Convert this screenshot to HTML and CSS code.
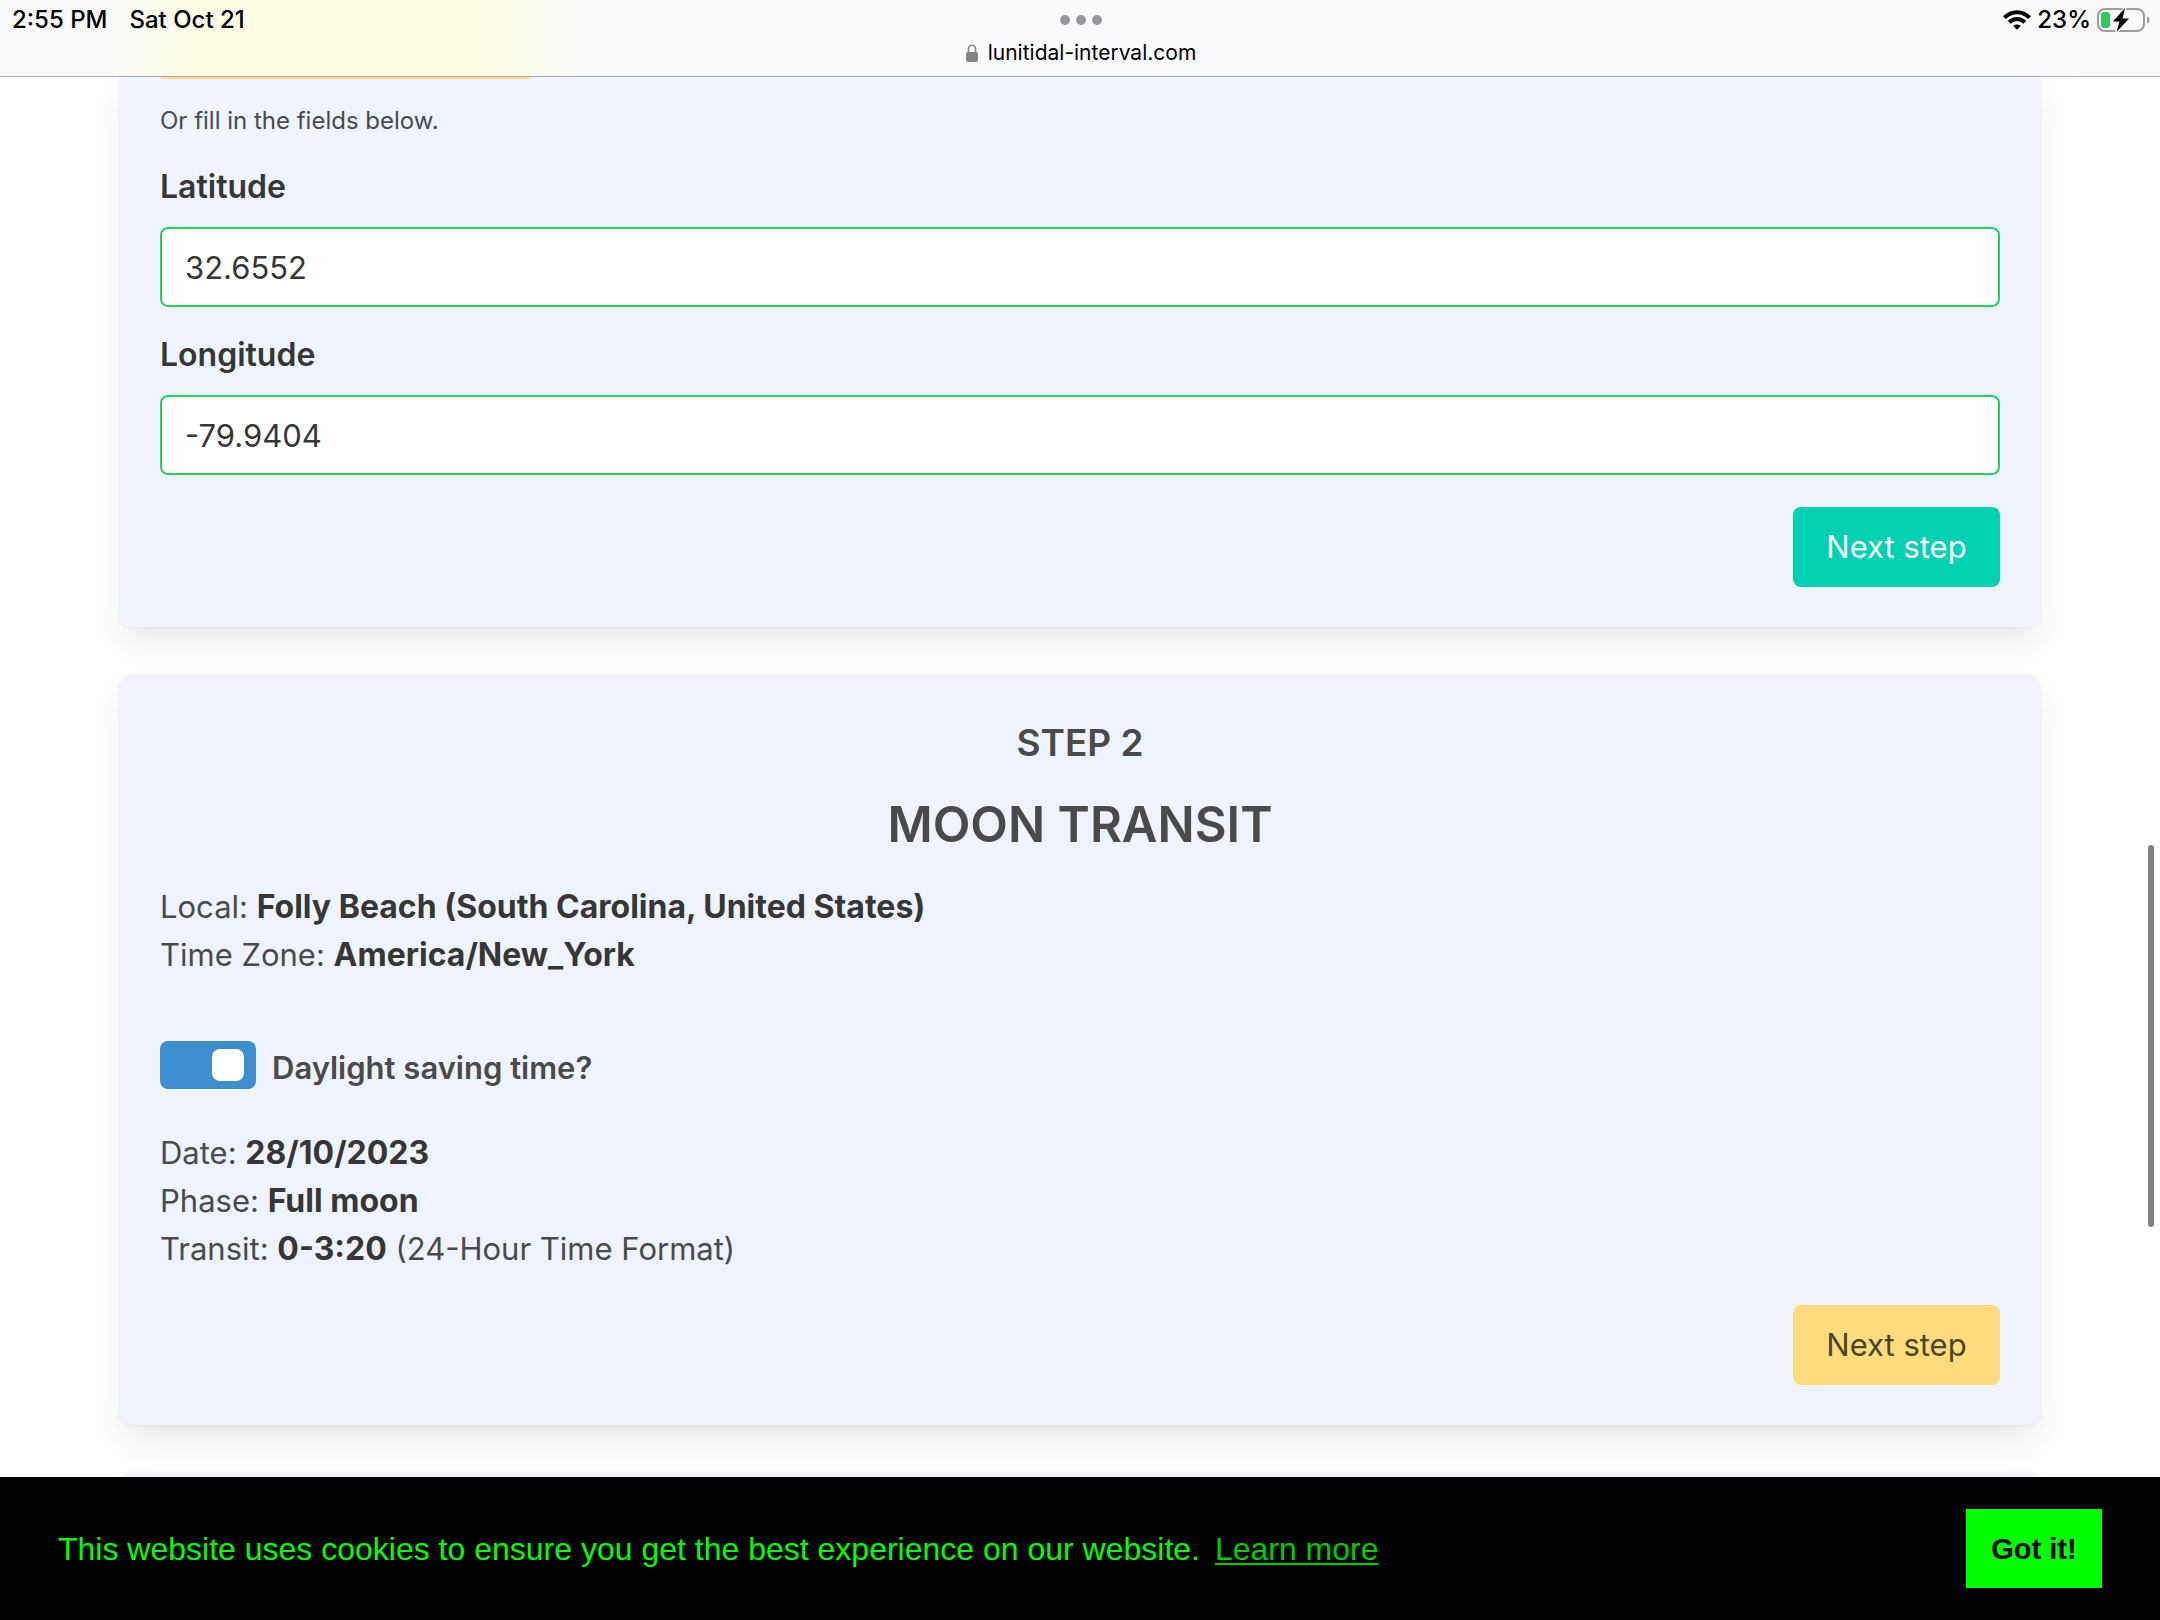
FILE: index.html
```html
<!DOCTYPE html>
<html lang="en">
<head>
    <meta charset="UTF-8">
    <meta name="viewport" content="width=device-width, initial-scale=1.0">
    <title>Lunitidal interval</title>
    <link rel="stylesheet" href="styles.css">
</head>
<body>
    <header class="topbar">
        <div class="status">
            <div class="clock">
                <span>2:55 PM</span>
                <span>Sat Oct 21</span>
            </div>
            <svg class="dots" width="42" height="10" viewBox="0 0 42 10">
                <circle cx="5" cy="5" r="5"/>
                <circle cx="21" cy="5" r="5"/>
                <circle cx="37" cy="5" r="5"/>
            </svg>
            <div class="power">
                <svg width="28" height="20" viewBox="0 0 28 20" fill="none" stroke="#000" stroke-width="4">
                    <path d="M1.5 7.6C8.500 .4 19.500 .4 26.500 7.600"/>
                    <path d="M6.200 12.200C10.600 7.900 17.400 7.900 21.800 12.200"/>
                    <path d="M10.200 15.900C12.300 13.900 15.700 13.900 17.800 15.900L14 19.800Z" fill="#000" stroke="none"/>
                </svg>
                <span>23%</span>
                <svg width="53" height="26" viewBox="0 0 53 26">
                    <rect x="1" y="2" width="46" height="22" rx="7" fill="none" stroke="#9c9c9e" stroke-width="2"/>
                    <path d="M50 9.500C53.500 10.500 53.500 15.500 50 16.500Z" fill="#9c9c9e"/>
                    <rect x="4" y="5" width="9" height="16" rx="3" fill="#34c759"/>
                    <path d="M28 1L16 14.500H22.500L19.500 25L32 11.500H25.500Z" fill="#000" stroke="#f9f9fa" stroke-width="3" paint-order="stroke"/>
                </svg>
            </div>
        </div>
        <div class="address">
            <svg width="12" height="18" viewBox="0 0 12 18">
                <path d="M2.500 9V5a3.500 3.800 0 0 1 7 0v4" fill="none" stroke="#858589" stroke-width="1.600"/>
                <rect x="0" y="8" width="12" height="10" rx="2" fill="#858589"/>
            </svg>
            <span>lunitidal-interval.com</span>
        </div>
    </header>

    <main>
        <section class="box first">
            <div class="locate"></div>
            <p class="help">Or fill in the fields below.</p>
            <div class="field">
                <label for="lat">Latitude</label>
                <input type="text" id="lat" value="32.6552">
            </div>
            <div class="field">
                <label for="lng">Longitude</label>
                <input type="text" id="lng" value="-79.9404">
            </div>
            <div class="actions">
                <button class="button primary">Next step</button>
            </div>
        </section>

        <section class="box">
            <h3>STEP 2</h3>
            <h2>MOON TRANSIT</h2>
            <p>Local: <strong>Folly Beach (South Carolina, United States)</strong></p>
            <p>Time Zone: <strong>America/New_York</strong></p>
            <div class="switch">
                <input type="checkbox" id="dst" checked>
                <label for="dst">Daylight saving time?</label>
            </div>
            <p>Date: <strong>28/10/2023</strong></p>
            <p>Phase: <strong>Full moon</strong></p>
            <p>Transit: <strong>0-3:20</strong> (24-Hour Time Format)</p>
            <div class="actions">
                <button class="button warning">Next step</button>
            </div>
        </section>

        <section class="box"></section>
    </main>

    <div class="scrollbar"></div>

    <footer class="cookies">
        <p>This website uses cookies to ensure you get the best experience on our website. <a href="#">Learn more</a></p>
        <button>Got it!</button>
    </footer>
</body>
</html>
```

FILE: styles.css
```css
*{
    box-sizing: border-box;
}
body{
    margin: 0;
    height: 100vh;
    display: flex;
    flex-direction: column;
    overflow: hidden;
    background-color: white;
    color: #4a4a4a;
    font-family: Inter, "Liberation Sans", sans-serif;
    font-size: 31px;
    line-height: 48px;
}
p, h2, h3{
    margin: 0;
}
button, input{
    font: inherit;
}

/* status bar and address */
.topbar{
    flex: none;
    height: 77px;
    padding: 4px 10px 0 12px;
    border-bottom: 1px solid #a9abae;
    background: linear-gradient(to right, #f9f9f9 110px, #fdfdf0 150px, #fffee6 200px, #fffee6 480px, #fafbfd 590px, #fafbfd 93%, #f9f9f9 97%);
    color: black;
    font-size: 24px;
    font-weight: 500;
    line-height: 32px;
}
.status{
    display: grid;
    grid-template-columns: 1fr auto 1fr;
    align-items: center;
}
.clock{
    display: flex;
    gap: 22px;
}
.dots{
    fill: #96979a;
}
.power{
    display: flex;
    align-items: center;
    justify-content: flex-end;
    gap: 6px;
}
.address{
    display: flex;
    align-items: center;
    justify-content: center;
    gap: 10px;
    font-size: 21px;
    font-weight: 400;
    line-height: 34px;
}

/* steps */
main{
    flex: 1;
    min-height: 0;
    overflow: hidden;
    padding: 0 120px;
}
.box{
    margin-bottom: 48px;
    padding: 40px;
    border-radius: 12px;
    background-color: #eff4fc;
    box-shadow: 0 16px 32px -4px rgba(10,10,10,0.1), 0 0 0 2px rgba(10,10,10,0.02);
}
.first{
    padding-top: 0;
    border-radius: 0 0 12px 12px;
}
.locate{
    width: 370px;
    height: 2px;
    border-radius: 0 0 8px 8px;
    background-color: #ffdc7d;
}
.help{
    margin: 24px 0;
    font-size: 24px;
    line-height: 36px;
}
.field{
    margin-bottom: 24px;
}
.field label{
    display: block;
    margin-bottom: 16px;
    color: #363636;
    font-size: 32px;
    font-weight: 600;
}
.field input{
    display: block;
    width: 100%;
    height: 80px;
    padding: 0 23px;
    border: 2px solid #23d160;
    border-radius: 8px;
    background-color: white;
    color: #363636;
}
strong{
    color: #363636;
    font-size: 32px;
    font-weight: 700;
}
.actions{
    display: flex;
    justify-content: flex-end;
    margin-top: 32px;
}
.button{
    height: 80px;
    width: 207px;
    padding: 0;
    border: none;
    border-radius: 8px;
    cursor: pointer;
}
.primary{
    background-color: #00d1b2;
    color: white;
}
.warning{
    background-color: #ffdc7d;
    color: #4d4426;
}
h3, h2{
    text-align: center;
    font-weight: 600;
}
h3{
    margin: 4px 0 26px;
    font-size: 37px;
}
h2{
    margin-bottom: 26px;
    font-size: 49px;
    line-height: 64px;
}
.switch{
    display: flex;
    align-items: center;
    gap: 16px;
    margin: 62px 0 40px;
}
.switch input{
    appearance: none;
    display: flex;
    justify-content: flex-end;
    width: 96px;
    height: 48px;
    margin: 0;
    padding: 8px 12px;
    border-radius: 8px;
    background-color: #3e8ed0;
}
.switch input::before{
    content: "";
    width: 32px;
    height: 32px;
    border-radius: 8px;
    background-color: white;
}
.switch label{
    padding-top: 6px;
    line-height: 42px;
    font-weight: 600;
}

.scrollbar{
    position: fixed;
    right: 6px;
    top: 845px;
    width: 6px;
    height: 382px;
    border-radius: 3px;
    background-color: #808080;
}

/* cookie banner */
.cookies{
    flex: none;
    display: flex;
    align-items: center;
    justify-content: space-between;
    padding: 32px 58px;
    background-color: black;
    color: #00ff00;
    font-family: "Liberation Sans", Arial, sans-serif;
    font-size: 32px;
}
.cookies a{
    margin-left: 6px;
    color: #00cc00;
    text-decoration-thickness: 2px;
    text-underline-offset: 3px;
}
.cookies button{
    width: 136px;
    height: 79px;
    padding: 0;
    border: none;
    background-color: #00ff00;
    color: black;
    font-size: 29px;
    font-weight: 700;
}
```
